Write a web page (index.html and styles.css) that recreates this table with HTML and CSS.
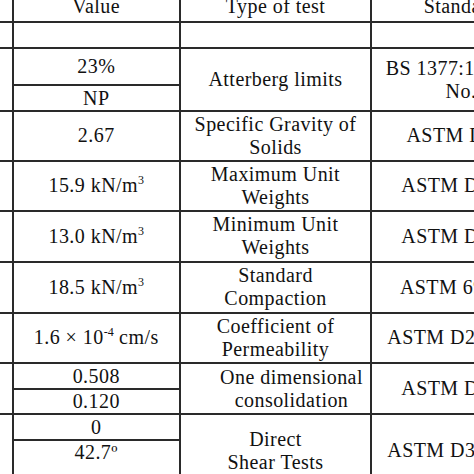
FILE: index.html
```html
<!DOCTYPE html>
<html>
<head>
<meta charset="utf-8">
<link rel="stylesheet" href="styles.css">
</head>
<body>
<div class="viewport">
<table class="props">
  <colgroup>
    <col class="c-prop">
    <col class="c-val">
    <col class="c-test">
    <col class="c-std">
  </colgroup>
  <thead>
    <tr class="r-head">
      <th>Property</th>
      <th>Value</th>
      <th>Type of test</th>
      <th>Standard</th>
    </tr>
  </thead>
  <tbody>
    <tr class="r26"><td></td><td></td><td></td><td></td></tr>
    <tr class="r37">
      <td rowspan="2"></td>
      <td>23%</td>
      <td rowspan="2">Atterberg limits</td>
      <td rowspan="2">BS 1377:1990 (2)<br>No.</td>
    </tr>
    <tr class="r26"><td>NP</td></tr>
    <tr class="r50">
      <td></td>
      <td>2.67</td>
      <td>Specific Gravity of<br>Solids</td>
      <td>ASTM D854</td>
    </tr>
    <tr class="r50">
      <td></td>
      <td>15.9 kN/m<sup>3</sup></td>
      <td>Maximum Unit<br>Weights</td>
      <td>ASTM D4253</td>
    </tr>
    <tr class="r51">
      <td></td>
      <td>13.0 kN/m<sup>3</sup></td>
      <td>Minimum Unit<br>Weights</td>
      <td>ASTM D4254</td>
    </tr>
    <tr class="r51">
      <td></td>
      <td>18.5 kN/m<sup>3</sup></td>
      <td>Standard<br>Compaction</td>
      <td>ASTM 698-12</td>
    </tr>
    <tr class="r50">
      <td></td>
      <td>1.6 × 10<sup>-4</sup> cm/s</td>
      <td>Coefficient of<br>Permeability</td>
      <td>ASTM D2434-68</td>
    </tr>
    <tr class="r26">
      <td rowspan="2"></td>
      <td>0.508</td>
      <td rowspan="2" class="indent">One dimensional<br>consolidation</td>
      <td rowspan="2">ASTM D2435</td>
    </tr>
    <tr class="r25"><td>0.120</td></tr>
    <tr class="r26">
      <td rowspan="2"></td>
      <td>0</td>
      <td rowspan="2">Direct<br>Shear Tests</td>
      <td rowspan="2">ASTM D3080-04</td>
    </tr>
    <tr class="r47"><td class="top">42.7º</td></tr>
  </tbody>
</table>
</div>
</body>
</html>
```

FILE: styles.css
```css
html, body {
  margin: 0;
  padding: 0;
  background: #ffffff;
}

.viewport {
  width: 474px;
  height: 474px;
  overflow: hidden;
}

.props {
  border-collapse: collapse;
  table-layout: fixed;
  width: 650px;
  margin-left: -100px;
  margin-top: -20px;
  font-family: "Liberation Serif", "Times New Roman", serif;
  font-size: 20px;
  letter-spacing: 0.45px;
  line-height: 23px;
  color: #111111;
}

.c-prop { width: 111.5px; }
.c-val { width: 167.5px; }
.c-test { width: 191px; }
.c-std { width: 180px; }

.props th,
.props td {
  border: 2px solid #2a2a2a;
  padding: 0 2px;
  text-align: center;
  vertical-align: middle;
  font-weight: normal;
  white-space: nowrap;
}

.props th {
  vertical-align: bottom;
  padding-bottom: 3px;
}

.r-head { height: 41px; }
.r25 { height: 25px; }
.r26 { height: 26px; }
.r37 { height: 37px; }
.r47 { height: 47px; }
.r50 { height: 50px; }
.r51 { height: 51px; }

.props td.top {
  vertical-align: top;
  padding-top: 0;
}

.props td.indent {
  padding-left: 34px;
}

.props .r50 td,
.props .r51 td {
  padding-bottom: 1px;
}

.props sup {
  font-size: 12px;
  line-height: 0;
  vertical-align: 8px;
  letter-spacing: 0;
}
```
